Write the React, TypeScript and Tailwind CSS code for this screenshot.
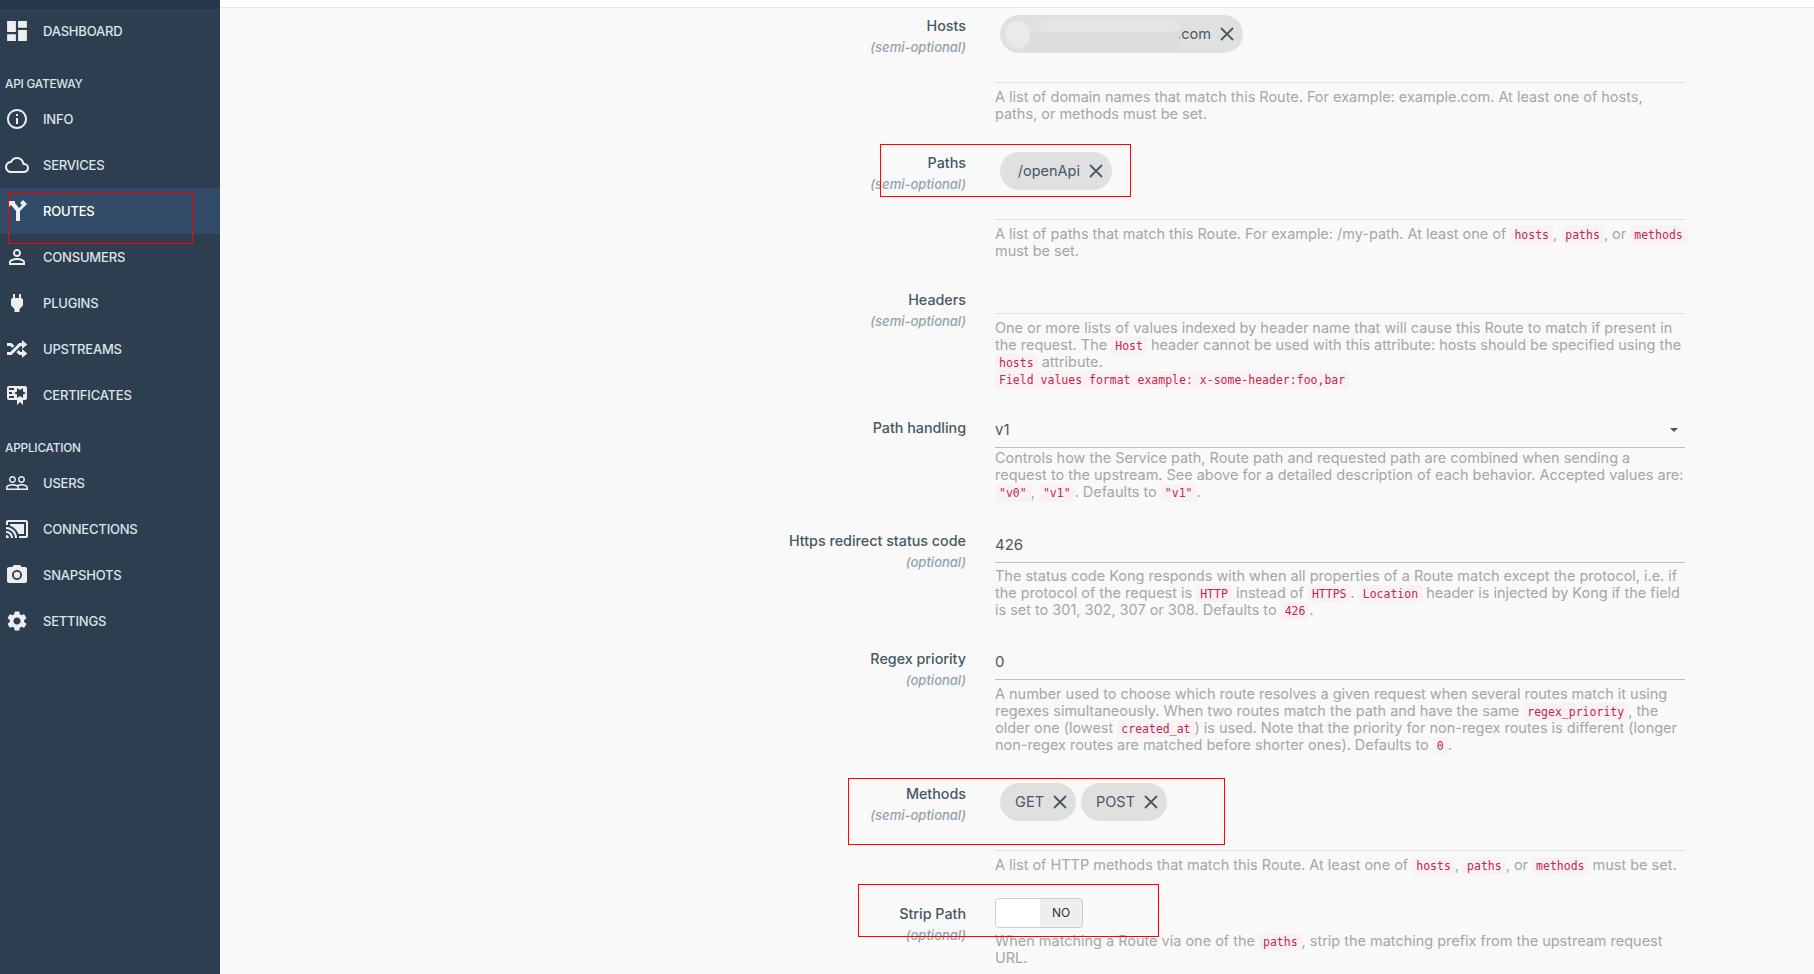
import type { ReactNode } from "react";
import {
  MdCastConnected,
  MdDashboard,
  MdInfoOutline,
  MdOutlineCloud,
  MdPeopleOutline,
  MdPersonOutline,
  MdPhotoCamera,
  MdPower,
  MdSettings,
} from "react-icons/md";

function CertificateIcon({ className }: { className?: string }) {
  return (
    <svg viewBox="0 0 24 24" fill="currentColor" className={className}>
      <path d="M4,3C2.89,3 2,3.89 2,5V15A2,2 0 0,0 4,17H12V22L15,19L18,22V17H20A2,2 0 0,0 22,15V8L22,6V5A2,2 0 0,0 20,3H16V3H4M12,5L15,7L18,5V8.5L21,10L18,11.5V15L15,13L12,15V11.5L9,10L12,8.5V5M4,5H9V7H4V5M4,9H7V11H4V9M4,13H9V15H4V13Z" />
    </svg>
  );
}

function ShuffleIcon({ className }: { className?: string }) {
  return (
    <svg viewBox="0 0 24 24" fill="currentColor" className={className}>
      <path d="M17,3L22.25,7.5L17,12L22.25,16.5L17,21V18H14.26L11.44,15.18L13.56,13.06L15.5,15H17V12L17,9H15.5L6.5,18H2V15H5.26L14.26,6H17V3M2,6H6.5L9.32,8.82L7.2,10.94L5.26,9H2V6Z" />
    </svg>
  );
}

function RouteIcon({ className }: { className?: string }) {
  return (
    <svg viewBox="0 0 24 24" fill="currentColor" className={className}>
      <path d="M3 2H10L10 4L14 9L17 6L15 4L18 1L22 5L19 8L15 12V22H11V12L6 6L3 9Z" />
    </svg>
  );
}

function DashboardIcon({ className }: { className?: string }) {
  return <MdDashboard className={`${className} scale-110`} />;
}

const gateway = [
  { label: "INFO", icon: MdInfoOutline },
  { label: "SERVICES", icon: MdOutlineCloud },
  { label: "ROUTES", icon: RouteIcon, active: true },
  { label: "CONSUMERS", icon: MdPersonOutline },
  { label: "PLUGINS", icon: MdPower },
  { label: "UPSTREAMS", icon: ShuffleIcon },
  { label: "CERTIFICATES", icon: CertificateIcon },
];

const application = [
  { label: "USERS", icon: MdPeopleOutline },
  { label: "CONNECTIONS", icon: MdCastConnected },
  { label: "SNAPSHOTS", icon: MdPhotoCamera },
  { label: "SETTINGS", icon: MdSettings },
];

function NavItem({
  label,
  icon: Icon,
  active,
}: {
  label: string;
  icon: (props: { className?: string }) => ReactNode;
  active?: boolean;
}) {
  return (
    <div className={`flex h-[46px] items-center ${active ? "bg-[#324b66] text-white" : "text-[#dfe3e7]"}`}>
      <div className="flex w-[34px] justify-center">
        <Icon className="h-[24px] w-[24px] text-[#eeeeee]" />
      </div>
      <span className="ml-[9px] pt-[2px] text-[13px] font-medium tracking-[-0.2px]">{label}</span>
    </div>
  );
}

function SectionTitle({ children }: { children: ReactNode }) {
  return (
    <div className="flex h-[42px] items-end pb-[2px] pl-[5px] text-[11.8px] font-medium tracking-[-0.2px] text-[#dfe3e7]">
      {children}
    </div>
  );
}

function Code({ children }: { children: ReactNode }) {
  return (
    <code className="rounded-[3px] bg-[#f9f2f4] px-[4px] py-[2px] font-['DejaVu_Sans_Mono',monospace] text-[11.5px] leading-none tracking-normal text-[#c7254e]">
      {children}
    </code>
  );
}

function CloseIcon() {
  return (
    <svg viewBox="0 0 16 16" className="h-[16px] w-[16px] text-[#455a64]" fill="none" stroke="currentColor" strokeWidth="1.8">
      <path d="M2 2L14 14M14 2L2 14" />
    </svg>
  );
}

function Chip({ children, className }: { children: ReactNode; className: string }) {
  return (
    <div className={`relative flex h-[38px] items-center justify-end overflow-hidden rounded-full bg-[#e0e0e0] pr-[8px] text-[14.5px] text-[#455a64] ${className}`}>
      {children}
      <span className="ml-[8px]">
        <CloseIcon />
      </span>
    </div>
  );
}

function Field({
  label,
  hint,
  rowClass,
  labelClass = "",
  children,
}: {
  label: string;
  hint?: string;
  rowClass: string;
  labelClass?: string;
  children: ReactNode;
}) {
  return (
    <div className={`flex gap-[29px] ${rowClass}`}>
      <div className={`w-[746px] text-right ${labelClass}`}>
        <div className="h-[22px] text-[14.3px] leading-[21px] font-medium text-[#455a64]">{label}</div>
        {hint && <div className="h-[21px] text-[13px] leading-[21px] font-medium text-[#90a4ae] italic">{hint}</div>}
      </div>
      <div className="w-[690px]">{children}</div>
    </div>
  );
}

function Help({ className, children }: { className: string; children: ReactNode }) {
  return <div className={`whitespace-nowrap text-[14.5px] leading-[17px] tracking-[-0.02px] text-[#a6a6a6] ${className}`}>{children}</div>;
}

function Underlined({ className, children }: { className: string; children?: ReactNode }) {
  return <div className={`border-b ${className}`}>{children}</div>;
}

export default function App() {
  return (
    <div className="relative flex h-[974px] overflow-hidden bg-[#f9f9f9] font-['Inter',sans-serif]">
      <aside className="relative w-[220px] shrink-0 bg-[#2c3e50] pt-[8px]">
        <div className="absolute top-0 left-0 h-[9px] w-full bg-[#25364a]" />
        <NavItem label="DASHBOARD" icon={DashboardIcon} />
        <SectionTitle>API GATEWAY</SectionTitle>
        {gateway.map((item) => (
          <NavItem key={item.label} {...item} />
        ))}
        <SectionTitle>APPLICATION</SectionTitle>
        {application.map((item) => (
          <NavItem key={item.label} {...item} />
        ))}
      </aside>

      <main className="flex-1">
        <div className="h-[8px] border-b border-[#e8e8e8] bg-white" />
        <div className="pt-[7px]">
          <Field label="Hosts" hint="(semi-optional)" rowClass="h-[137px]">
            <Underlined className="h-[68px] border-[#e0e0e0] pl-[5px]">
              <Chip className="w-[243px]">
                <span>.com</span>
                <div className="absolute top-[4px] left-[40px] h-[14px] w-[140px] rounded-full bg-[#e4e5e5] blur-[1px]" />
                <div className="absolute top-[17px] left-[24px] h-[21px] w-[156px] bg-[#dcdddd] blur-[1px]" />
                <div className="absolute top-[6px] left-[6px] h-[27px] w-[24px] rounded-full bg-[#e9ebea] blur-[1px]" />
              </Chip>
            </Underlined>
            <Help className="pt-[5px]">
              A list of domain names that match this Route. For example: example.com. At least one of hosts,
              <br />
              paths, or methods must be set.
            </Help>
          </Field>

          <Field label="Paths" hint="(semi-optional)" rowClass="h-[137px]">
            <Underlined className="h-[68px] border-[#e0e0e0] pl-[5px]">
              <Chip className="w-[112px]">/openApi</Chip>
            </Underlined>
            <Help className="pt-[5px]">
              A list of paths that match this Route. For example: /my-path. At least one of <Code>hosts</Code>, <Code>paths</Code>, or <Code>methods</Code>
              <br />
              must be set.
            </Help>
          </Field>

          <Field label="Headers" hint="(semi-optional)" rowClass="h-[128px]">
            <Underlined className="h-[25px] border-[#e0e0e0]" />
            <Help className="pt-[5px]">
              One or more lists of values indexed by header name that will cause this Route to match if present in
              <br />
              the request. The <Code>Host</Code> header cannot be used with this attribute: hosts should be specified using the
              <br />
              <Code>hosts</Code> attribute.
              <br />
              <Code>Field values format example: x-some-header:foo,bar</Code>
            </Help>
          </Field>

          <Field label="Path handling" rowClass="h-[113px]">
            <Underlined className="flex h-[31px] items-center justify-between border-[#c0c0c0] pr-[7px] pb-[4px] text-[15px] text-[#555555]">
              <span>v1</span>
              <span className="h-0 w-0 border-x-[4px] border-t-[4px] border-x-transparent border-t-[#555555]" />
            </Underlined>
            <Help className="pt-[1px]">
              Controls how the Service path, Route path and requested path are combined when sending a
              <br />
              request to the upstream. See above for a detailed description of each behavior. Accepted values are:
              <br />
              <Code>"v0"</Code>, <Code>"v1"</Code>. Defaults to <Code>"v1"</Code>.
            </Help>
          </Field>

          <Field label="Https redirect status code" hint="(optional)" rowClass="h-[118px]">
            <Underlined className="flex h-[33px] items-end border-[#c0c0c0] pb-[6px] text-[15px] text-[#555555]">426</Underlined>
            <Help className="pt-[4px]">
              The status code Kong responds with when all properties of a Route match except the protocol, i.e. if
              <br />
              the protocol of the request is <Code>HTTP</Code> instead of <Code>HTTPS</Code>. <Code>Location</Code> header is injected by Kong if the field
              <br />
              is set to 301, 302, 307 or 308. Defaults to <Code>426</Code>.
            </Help>
          </Field>

          <Field label="Regex priority" hint="(optional)" rowClass="h-[135px]">
            <Underlined className="flex h-[32px] items-end border-[#c0c0c0] pb-[6px] text-[15px] text-[#555555]">0</Underlined>
            <Help className="pt-[5px]">
              A number used to choose which route resolves a given request when several routes match it using
              <br />
              regexes simultaneously. When two routes match the path and have the same <Code>regex_priority</Code>, the
              <br />
              older one (lowest <Code>created_at</Code>) is used. Note that the priority for non-regex routes is different (longer
              <br />
              non-regex routes are matched before shorter ones). Defaults to <Code>0</Code>.
            </Help>
          </Field>

          <Field label="Methods" hint="(semi-optional)" rowClass="h-[115px]">
            <Underlined className="flex h-[68px] gap-[5px] border-[#e0e0e0] pl-[5px]">
              <Chip className="w-[76px]">GET</Chip>
              <Chip className="w-[86px]">POST</Chip>
            </Underlined>
            <Help className="pt-[5px]">
              A list of HTTP methods that match this Route. At least one of <Code>hosts</Code>, <Code>paths</Code>, or <Code>methods</Code> must be set.
            </Help>
          </Field>

          <Field label="Strip Path" hint="(optional)" rowClass="h-[90px]" labelClass="pt-[5px]">
            <div className="flex h-[30px] w-[88px] overflow-hidden rounded-[4px] border border-[#cccccc] bg-[#eeeeee]">
              <div className="w-[44px] bg-white" />
              <div className="flex-1 text-center text-[12px] leading-[28px] text-[#333333]">NO</div>
            </div>
            <Help className="pt-[4px]">
              When matching a Route via one of the <Code>paths</Code>, strip the matching prefix from the upstream request
              <br />
              URL.
            </Help>
          </Field>
        </div>
      </main>

      <div className="absolute top-[192px] left-[8px] h-[52px] w-[185px] border border-[#ff0000]" />
      <div className="absolute top-[144px] left-[880px] h-[53px] w-[251px] border border-[#ff0000]" />
      <div className="absolute top-[778px] left-[848px] h-[67px] w-[377px] border border-[#ff0000]" />
      <div className="absolute top-[884px] left-[858px] h-[53px] w-[301px] border border-[#ff0000]" />
    </div>
  );
}
